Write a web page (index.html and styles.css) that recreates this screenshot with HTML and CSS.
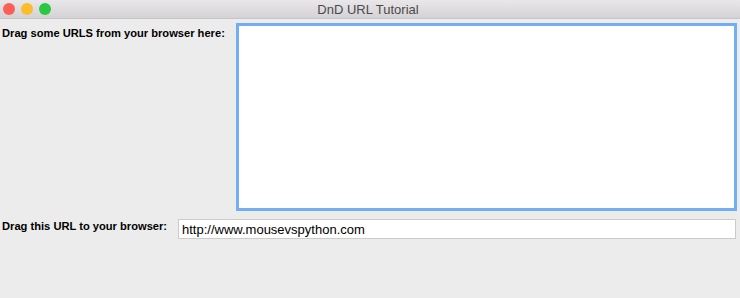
FILE: index.html
```html
<!DOCTYPE html>
<html lang="en">
<head>
    <meta charset="UTF-8">
    <title>DnD URL Tutorial</title>
    <link rel="stylesheet" href="styles.css">
</head>
<body>

<div class="window">
    <div class="titlebar">
        <div class="lights">
            <span class="light red"></span>
            <span class="light yellow"></span>
            <span class="light green"></span>
        </div>
        <div class="title">DnD URL Tutorial</div>
    </div>

    <div class="content">
        <div class="row drop-row">
            <label class="label drop-label" for="drop">Drag some URLS from your browser here:</label>
            <textarea id="drop" class="drop-box"></textarea>
        </div>
        <div class="row url-row">
            <label class="label url-label" for="url">Drag this URL to your browser:</label>
            <input type="text" id="url" class="url-box" value="http://www.mousevspython.com">
        </div>
    </div>
</div>

</body>
</html>
```

FILE: styles.css
```css
body {
    margin: 0;
    padding: 0;
    background-color: #ececec;
    font-family: "Liberation Sans", Arial, sans-serif;
}
.window {
    width: 740px;
    height: 298px;
    background-color: #ececec;
}
.titlebar {
    position: relative;
    height: 18px;
    background: linear-gradient(#e9e7e9, #d4d2d4);
    border-bottom: 1px solid #c6c4c6;
    display: flex;
    justify-content: center;
    align-items: center;
}
.lights {
    position: absolute;
    left: 3px;
    top: 3px;
    display: flex;
    gap: 6px;
}
.light {
    width: 12px;
    height: 12px;
    border-radius: 50%;
}
.red {
    background-color: #fc5f57;
}
.yellow {
    background-color: #fdbc2e;
}
.green {
    background-color: #28c840;
}
.title {
    font-size: 13px;
    color: #4a4a4a;
    padding-top: 1px;
    margin-left: -4px;
}
.content {
    padding: 4px 3px 0 2px;
}
.row {
    display: flex;
    align-items: flex-start;
}
.label {
    font-size: 11.15px;
    font-weight: bold;
    line-height: 14px;
    color: #000;
    white-space: nowrap;
}
.drop-label {
    width: 234px;
    padding-top: 3px;
}
.drop-box {
    box-sizing: border-box;
    width: 501px;
    height: 188px;
    margin: 0;
    border: 3px solid #72aef2;
    background: white;
    resize: none;
    outline: none;
}
.url-row {
    margin-top: 8px;
}
.url-label {
    width: 176px;
}
.url-box {
    box-sizing: border-box;
    width: 558px;
    height: 20px;
    margin: 0;
    padding: 1px 3px 0 3px;
    border: 1px solid #cbcbcb;
    background: white;
    font-family: "Liberation Sans", Arial, sans-serif;
    font-size: 13px;
    color: #000;
    outline: none;
}
```
